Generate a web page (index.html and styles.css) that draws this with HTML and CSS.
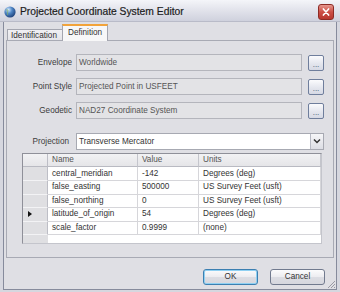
FILE: index.html
```html
<!DOCTYPE html>
<html>
<head>
<meta charset="utf-8">
<link rel="stylesheet" href="styles.css">
</head>
<body>
<div class="dialog">
  <div class="titlebar">
    <svg class="app-icon" width="12" height="12" viewBox="0 0 12 12">
      <defs>
        <radialGradient id="g" cx="0.35" cy="0.3" r="0.75">
          <stop offset="0" stop-color="#d8ecff"/>
          <stop offset="0.45" stop-color="#4f86c6"/>
          <stop offset="1" stop-color="#1d3f78"/>
        </radialGradient>
      </defs>
      <circle cx="6" cy="6" r="5.6" fill="url(#g)"/>
      <path d="M2.2 4.2 C3.5 3.2 4.6 4.6 3.6 5.8 C3 6.6 4.2 7.8 3.4 9" stroke="#7fb06a" stroke-width="1.1" fill="none" opacity="0.7"/>
    </svg>
    <span class="title">Projected Coordinate System Editor</span>
    <span class="close">
      <svg width="16" height="16" viewBox="0 0 16 16">
        <path d="M5 4.5 L11 11.5 M11 4.5 L5 11.5" stroke="#fff" stroke-width="1.8" stroke-linecap="round"/>
      </svg>
    </span>
  </div>
  <div class="client">
    <div class="tabs">
      <div class="tab">Identification</div>
      <div class="tab active">Definition</div>
    </div>
    <div class="panel">
      <div class="form">
        <label class="lbl">Envelope</label>
        <div class="field">Worldwide</div>
        <button class="dots">...</button>

        <label class="lbl">Point Style</label>
        <div class="field">Projected Point in USFEET</div>
        <button class="dots">...</button>

        <label class="lbl">Geodetic</label>
        <div class="field">NAD27 Coordinate System</div>
        <button class="dots">...</button>

        <label class="lbl lbl-proj">Projection</label>
        <div class="select">
          <span class="select-text">Transverse Mercator</span>
          <span class="select-btn">
            <svg width="8" height="6" viewBox="0 0 8 6"><path d="M1 1.5 L4 4.5 L7 1.5" stroke="#333" stroke-width="1.5" fill="none"/></svg>
          </span>
        </div>
      </div>
      <div class="grid">
        <div class="rh hdr"></div>
        <div class="cell hdr">Name</div>
        <div class="cell hdr">Value</div>
        <div class="cell hdr">Units</div>

        <div class="rh"></div>
        <div class="cell">central_meridian</div>
        <div class="cell">-142</div>
        <div class="cell">Degrees (deg)</div>

        <div class="rh"></div>
        <div class="cell">false_easting</div>
        <div class="cell">500000</div>
        <div class="cell">US Survey Feet (usft)</div>

        <div class="rh"></div>
        <div class="cell">false_northing</div>
        <div class="cell">0</div>
        <div class="cell">US Survey Feet (usft)</div>

        <div class="rh current"><span class="arrow"></span></div>
        <div class="cell">latitude_of_origin</div>
        <div class="cell">54</div>
        <div class="cell">Degrees (deg)</div>

        <div class="rh"></div>
        <div class="cell">scale_factor</div>
        <div class="cell">0.9999</div>
        <div class="cell">(none)</div>
      </div>
    </div>
    <div class="buttons">
      <button class="btn default">OK</button>
      <button class="btn">Cancel</button>
    </div>
    <svg class="grip" width="9" height="9" viewBox="0 0 9 9">
      <path d="M8 1 L1 8 M8 4 L4 8 M8 7 L7 8" stroke="#9a9aa4" stroke-width="1"/>
    </svg>
  </div>
</div>
</body>
</html>
```

FILE: styles.css
```css
* { box-sizing: border-box; }

html, body {
  margin: 0;
  padding: 0;
}

body {
  width: 340px;
  height: 292px;
  overflow: hidden;
  background: #d6d7df;
  font-family: "Liberation Sans", Arial, sans-serif;
  font-size: 8.2px;
  color: #333;
}

.dialog {
  display: flex;
  flex-direction: column;
  width: 340px;
  height: 292px;
}

.titlebar {
  height: 22px;
  flex: none;
  display: flex;
  align-items: center;
  padding: 2px 6px 0 4px;
  background: linear-gradient(#f4f5f9, #e3e4ec 45%, #cfd1dd);
  border-bottom: 1px solid #b9bbc8;
}

.app-icon {
  flex: none;
  margin-right: 4px;
}

.title {
  font-size: 10.3px;
  color: #1c1c1c;
  letter-spacing: 0;
  -webkit-text-stroke: 0.2px #1c1c1c;
}

.close {
  margin-left: auto;
  width: 16px;
  height: 16px;
  border-radius: 3px;
  background: linear-gradient(#e6978e, #cc4e45 50%, #b8372f);
  border: 1px solid #8d2b25;
  display: flex;
  align-items: center;
  justify-content: center;
}
.close svg { display: block; }

.client {
  flex: 1;
  position: relative;
  margin: 0 3px 2px 3px;
  border: 1px solid #868b9c;
  border-top: none;
  background: #dfdfe4;
  padding: 1px 2px 0 2px;
  display: flex;
  flex-direction: column;
}

.tabs {
  display: flex;
  align-items: flex-end;
  height: 18px;
  margin-bottom: -1px;
  padding-left: 1px;
}

.tab {
  height: 12px;
  padding: 0 3px;
  width: 56px;
  border: 1px solid #a4a6b0;
  border-bottom: none;
  background: linear-gradient(#f0f0f3, #e3e3e8);
  color: #333;
  line-height: 11px;
  font-size: 8.2px;
}

.tab.active {
  position: relative;
  z-index: 1;
  width: 46px;
  height: 17px;
  margin-left: -1px;
  padding: 0 5px;
  background: #f7f7f8;
  border-top: 2px solid #f2a33a;
  line-height: 13px;
}

.panel {
  flex: none;
  height: 218px;
  border: 1px solid #a8aab4;
  background: #dfdfe4;
  padding: 13px 9px 0 0;
}

.form {
  display: grid;
  grid-template-columns: 65px 1fr 16px;
  grid-template-rows: 17px 17px 17px 17px;
  row-gap: 7px;
  column-gap: 4px;
  align-items: center;
}

.lbl {
  text-align: right;
  color: #3c3c3c;
}
.lbl-proj {
  padding-right: 3px;
  margin-top: 13px;
}

.field {
  height: 17px;
  margin-right: 2px;
  border: 1px solid #b4b5bc;
  background: #e3e3e6;
  color: #555;
  padding-left: 2px;
  line-height: 15px;
  white-space: nowrap;
  overflow: hidden;
}

.dots {
  width: 16px;
  height: 16px;
  padding: 0;
  margin: 0;
  font: inherit;
  font-size: 8px;
  line-height: 18px;
  overflow: hidden;
  color: #3b4a6b;
  border: 1px solid #6f7e9c;
  border-radius: 2px;
  background: linear-gradient(#fbfbfd, #e4e6ee 55%, #d6d9e4);
  text-align: center;
}

.select {
  grid-column: 2 / 4;
  height: 17px;
  margin-top: 13px;
  border: 1px solid #a7a9b2;
  background: #fff;
  display: flex;
  align-items: center;
}
.select-text {
  flex: 1;
  padding-left: 2px;
  color: #333;
}
.select-btn {
  width: 13px;
  height: 15px;
  border-left: 1px solid #b8bac4;
  background: linear-gradient(#f6f6f8, #dcdde4);
  display: flex;
  align-items: center;
  justify-content: center;
}
.select-btn svg { display: block; }

.grid {
  margin: 10px 0 0 15px;
  width: 300px;
  height: 91px;
  border: 1px solid #8f9099;
  border-right-color: #c4c5cc;
  border-bottom-color: #c4c5cc;
  background: linear-gradient(to right, #dfdfe2 0 25px, #ffffff 25px);
  display: grid;
  grid-template-columns: 25px 90px 61px 1fr;
  grid-template-rows: 13px 14px 13.5px 13.5px 13.5px 13.5px;
  align-content: start;
}

.cell {
  border-right: 1px solid #d6d6da;
  border-bottom: 1px solid #d6d6da;
  padding-left: 4px;
  line-height: 12px;
  color: #333;
  white-space: nowrap;
  display: flex;
  align-items: center;
}
.cell.hdr {
  background: linear-gradient(#f2f2f4, #e5e5e8);
  border-bottom-color: #b9bac2;
  border-right-color: #c4c5cc;
  color: #555;
}

.rh {
  background: #dfdfe2;
  border-right: 1px solid #bdbec6;
  border-bottom: 1px solid #f3f3f5;
  display: flex;
  align-items: center;
  padding-left: 5px;
}
.rh.hdr {
  background: linear-gradient(#f2f2f4, #e5e5e8);
  border-bottom-color: #b9bac2;
}

.arrow {
  width: 0;
  height: 0;
  border-left: 4px solid #111;
  border-top: 3.5px solid transparent;
  border-bottom: 3.5px solid transparent;
}

.buttons {
  display: flex;
  justify-content: flex-end;
  gap: 12px;
  margin-top: 11px;
  padding-right: 9px;
}

.btn {
  width: 55px;
  height: 16px;
  padding: 0;
  margin: 0;
  font: inherit;
  font-size: 8.2px;
  color: #333;
  border: 1px solid #717a8e;
  border-radius: 3px;
  background: linear-gradient(#fbfbfc, #ececf0 50%, #dcdde3 51%, #d6d7de);
  line-height: 14px;
  text-align: center;
}
.btn.default {
  border-color: #3c7fb1;
  box-shadow: inset 0 0 0 1px #8fd0f2;
}

.grip {
  position: absolute;
  right: 0;
  bottom: 0;
}
```
